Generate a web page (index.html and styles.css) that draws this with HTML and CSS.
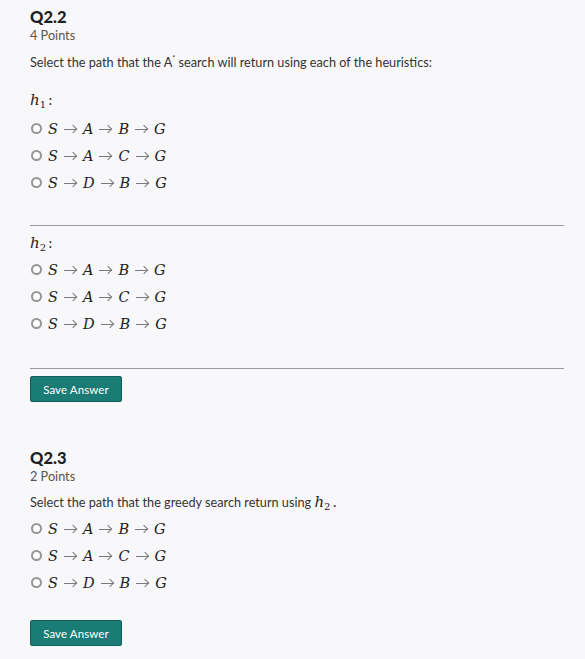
FILE: index.html
```html
<!DOCTYPE html>
<html>
<head>
<meta charset="utf-8">
<link rel="stylesheet" href="styles.css">
</head>
<body>
<div class="page">
  <section class="question">
    <h2 class="q-title">Q2.2</h2>
    <div class="points">4 Points</div>
    <p class="prompt">Select the path that the A<sup class="star">*</sup> search will return using each of the heuristics:</p>
    <div class="part">
      <div class="h-label"><span class="m">h</span><sub class="msub">1</sub><span class="colon">:</span></div>
      <ul class="options">
        <li><span class="radio"></span><span class="path"><i>S</i><b class="arr"></b><i>A</i><b class="arr"></b><i>B</i><b class="arr"></b><i>G</i></span></li>
        <li><span class="radio"></span><span class="path"><i>S</i><b class="arr"></b><i>A</i><b class="arr"></b><i>C</i><b class="arr"></b><i>G</i></span></li>
        <li><span class="radio"></span><span class="path"><i>S</i><b class="arr"></b><i>D</i><b class="arr"></b><i>B</i><b class="arr"></b><i>G</i></span></li>
      </ul>
    </div>
    <hr class="rule">
    <div class="part part-2">
      <div class="h-label"><span class="m">h</span><sub class="msub">2</sub><span class="colon">:</span></div>
      <ul class="options">
        <li><span class="radio"></span><span class="path"><i>S</i><b class="arr"></b><i>A</i><b class="arr"></b><i>B</i><b class="arr"></b><i>G</i></span></li>
        <li><span class="radio"></span><span class="path"><i>S</i><b class="arr"></b><i>A</i><b class="arr"></b><i>C</i><b class="arr"></b><i>G</i></span></li>
        <li><span class="radio"></span><span class="path"><i>S</i><b class="arr"></b><i>D</i><b class="arr"></b><i>B</i><b class="arr"></b><i>G</i></span></li>
      </ul>
    </div>
    <hr class="rule rule-2">
    <button class="save">Save Answer</button>
  </section>

  <section class="question q2">
    <h2 class="q-title">Q2.3</h2>
    <div class="points">2 Points</div>
    <p class="prompt">Select the path that the greedy search return using <span class="m">h</span><sub class="msub">2</sub><span class="colon">.</span></p>
    <ul class="options options-3">
      <li><span class="radio"></span><span class="path"><i>S</i><b class="arr"></b><i>A</i><b class="arr"></b><i>B</i><b class="arr"></b><i>G</i></span></li>
      <li><span class="radio"></span><span class="path"><i>S</i><b class="arr"></b><i>A</i><b class="arr"></b><i>C</i><b class="arr"></b><i>G</i></span></li>
      <li><span class="radio"></span><span class="path"><i>S</i><b class="arr"></b><i>D</i><b class="arr"></b><i>B</i><b class="arr"></b><i>G</i></span></li>
    </ul>
    <button class="save save-2">Save Answer</button>
  </section>
</div>
</body>
</html>
```

FILE: styles.css
```css
html, body {
  margin: 0;
  padding: 0;
  background: #f8f8fa;
}
body {
  font-family: "Lato", "Open Sans", "Liberation Sans", sans-serif;
  color: #333;
}
.page {
  padding: 7px 21px 0 30px;
}
.question {
  display: flex;
  flex-direction: column;
  align-items: flex-start;
}
.q-title {
  margin: 0;
  font-size: 16.5px;
  font-weight: 900;
  line-height: 20px;
  color: #1f1f1f;
}
.points {
  font-size: 12.7px;
  line-height: 16px;
  color: #555;
}
.prompt {
  margin: 10px 0 0;
  font-size: 12.7px;
  line-height: 18px;
  color: #333;
}
.star {
  font-size: 7px;
  vertical-align: top;
  line-height: 10px;
}
.part {
  display: flex;
  flex-direction: column;
}
.h-label {
  margin-top: 18px;
  font-family: "DejaVu Serif", "Liberation Serif", serif;
  font-size: 15px;
  line-height: 22px;
  color: #222;
}
.part-2 .h-label {
  margin-top: 6px;
}
.m {
  font-family: "DejaVu Serif", "Liberation Serif", serif;
  font-style: italic;
  font-size: 15px;
  color: #222;
}
.msub {
  font-family: "DejaVu Serif", serif;
  font-size: 10px;
  vertical-align: -3px;
  line-height: 0;
  color: #222;
}
.colon {
  font-family: "DejaVu Serif", serif;
  font-size: 14px;
  margin-left: 2px;
  color: #333;
}
.options {
  list-style: none;
  margin: 4px 0 0;
  padding: 0;
  display: flex;
  flex-direction: column;
}
.part-2 .options {
  margin-top: 2px;
}
.options li {
  display: flex;
  align-items: center;
  height: 27px;
}
.radio {
  width: 7px;
  height: 7px;
  border: 2px solid #959595;
  border-radius: 50%;
  background: #fff;
  margin: 0 6px 0 1px;
  flex: none;
}
.path {
  display: flex;
  align-items: center;
  color: #222;
}
.path i {
  font-family: "DejaVu Serif", "Liberation Serif", serif;
  font-style: italic;
  font-size: 14.5px;
  line-height: 20px;
}
.arr {
  position: relative;
  display: block;
  width: 13px;
  height: 1px;
  background: #7a7a7a;
  margin: 1px 6px 0 6px;
}
.arr::after {
  content: "";
  position: absolute;
  top: -3px;
  right: 1px;
  width: 5px;
  height: 5px;
  border-top: 1px solid #7a7a7a;
  border-right: 1px solid #7a7a7a;
  transform: rotate(45deg);
}
.rule {
  width: 100%;
  margin: 29px 0 0;
  border: 0;
  border-top: 1px solid #999;
  height: 0;
  align-self: stretch;
}
.rule-2 {
  margin-top: 31px;
}
.save {
  margin-top: 7px;
  width: 92px;
  height: 26px;
  padding: 0;
  background: #1b7c76;
  border: 1px solid #13605b;
  border-radius: 2px;
  color: #fff;
  font-family: "Lato", "Liberation Sans", sans-serif;
  font-size: 11.5px;
  font-weight: 400;
  letter-spacing: 0.1px;
}
.q2 {
  margin-top: 46px;
}
.q2 .prompt {
  margin-top: 9px;
}
.options-3 {
  margin-top: 4px;
}
.save-2 {
  margin-top: 24px;
}
```
